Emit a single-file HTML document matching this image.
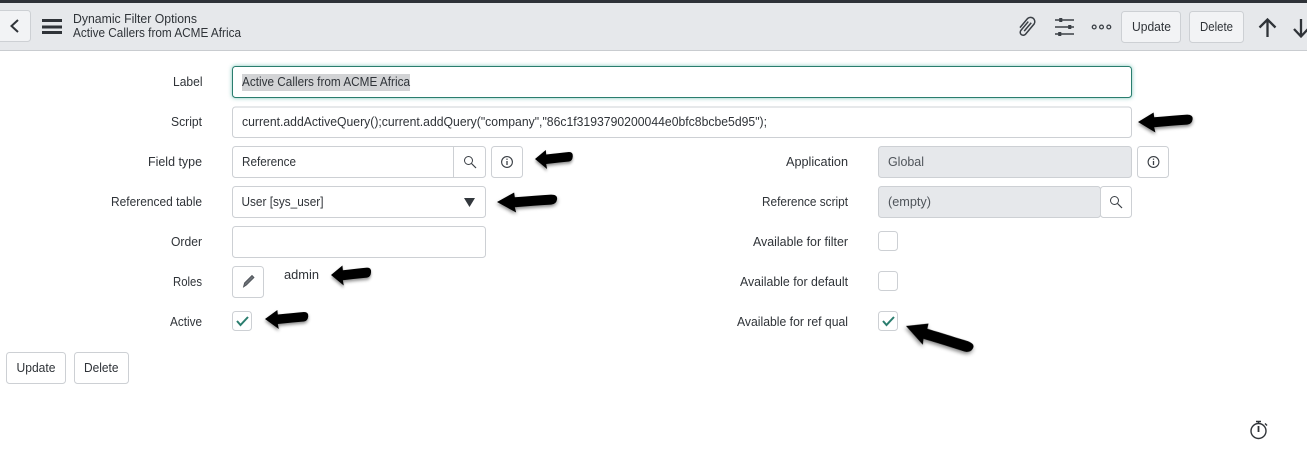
<!DOCTYPE html>
<html><head><meta charset="utf-8">
<style>
html,body{margin:0;padding:0;background:#fff;width:1307px;height:472px;overflow:hidden}
svg{display:block}
text{font-family:"Liberation Sans",sans-serif;font-size:12.5px;fill:#2f3338}
.b{fill:#fff;stroke:#cdd0d4;stroke-width:1}
.g{fill:#e6e8eb;stroke:#cdd0d4;stroke-width:1}
.t{fill:#f2f3f5;stroke:#cdd0d4;stroke-width:1}
.i{fill:none;stroke:#3a3f45;stroke-width:1.1}
.c{fill:none;stroke:#2a7d6e;stroke-width:2}
</style></head><body>
<svg width="1307" height="472" viewBox="0 0 1307 472" xmlns="http://www.w3.org/2000/svg">
<defs>
<filter id="s" x="-30%" y="-50%" width="160%" height="220%"><feDropShadow dx="0" dy="2" stdDeviation="1.6" flood-color="#000" flood-opacity=".45"/></filter>
<filter id="glow" x="-2%" y="-30%" width="104%" height="160%"><feGaussianBlur stdDeviation="2.2"/></filter>
<path id="arr" d="M0 0 L13 -9 L13.500 -4.500 Q30 -6 41 -7 Q46 -7 45.500 -2.500 Q45 2 41 2.500 Q28 3.500 13.500 5 L14.500 10 Z" fill="#000" filter="url(#s)"/>
<g id="info" class="i"><circle cx="0" cy="0" r="5.400"/><path d="M0 -1V3" stroke-width="1.300"/><path d="M0 -3.400V-2.200" stroke-width="1.300"/></g>
<g id="mag" fill="none" stroke="#3a3f45"><circle cx="-1.500" cy="-1.500" r="4"/><path d="M1.500 1.500L6 6" stroke-width="1.200"/></g>
</defs>

<rect x="0" y="0" width="1307" height="3" fill="#2e3238"/>
<rect x="0" y="3" width="1307" height="47" fill="#e6e8eb"/>
<rect x="0" y="50" width="1307" height="1" fill="#c9ccd0"/>

<rect x="-3" y="10.500" width="33.500" height="31" rx="3" class="t"/>
<path d="M18 20L11.500 26L18 32" fill="none" stroke="#2f3338" stroke-width="2"/>
<path d="M42 20.500H62M42 27H62M42 32.500H62" stroke="#2f3338" stroke-width="3"/>
<text x="73" y="23" textLength="124" lengthAdjust="spacingAndGlyphs">Dynamic Filter Options</text>
<text x="73" y="37" textLength="168" lengthAdjust="spacingAndGlyphs">Active Callers from ACME Africa</text>

<g transform="translate(1027,27) rotate(40)" fill="none" stroke="#3a3f45" stroke-width="1.500"><path d="M-2.500 -5V6.500A3 3 0 0 0 3.500 6.500V-7A4.300 4.300 0 0 0 -5 -7V5"/><path d="M0.500 -6V5"/></g>
<path d="M1055 20H1074M1055 27H1074M1055 34H1074" stroke="#3a3f45" stroke-width="1.500"/>
<path d="M1060 18v4M1061.500 18v4M1069 25v4M1070.500 25v4M1059 32v4M1060.500 32v4" stroke="#3a3f45" stroke-width="1.600"/>
<g fill="none" stroke="#3a3f45" stroke-width="1.300"><circle cx="1094.200" cy="27" r="1.900"/><circle cx="1101.500" cy="27" r="1.900"/><circle cx="1108.800" cy="27" r="1.900"/></g>
<rect x="1121.500" y="11.500" width="59" height="31" rx="3" class="t"/>
<text x="1132" y="31" textLength="39" lengthAdjust="spacingAndGlyphs">Update</text>
<rect x="1189.500" y="11.500" width="54" height="31" rx="3" class="t"/>
<text x="1200" y="31" textLength="33" lengthAdjust="spacingAndGlyphs">Delete</text>
<path d="M1267.500 37V20M1259.500 27.500L1267.500 19.500L1275.500 27.500" fill="none" stroke="#2f3338" stroke-width="2.300"/>
<path d="M1301 19V36M1294 29L1301 36.500L1308 29" fill="none" stroke="#2f3338" stroke-width="2.300"/>

<rect x="232" y="66" width="900" height="32" rx="3" fill="#5fb8aa" opacity=".8" filter="url(#glow)"/>
<rect x="232.500" y="66.500" width="899" height="31" rx="3" fill="#fff" stroke="#2a7d6e"/>
<rect x="242" y="74" width="168" height="17" fill="#d2d3d5"/>
<rect x="232.500" y="107" width="899" height="30.500" rx="3" class="b"/>
<rect x="232.500" y="146.500" width="253" height="31" rx="3" class="b"/>
<path d="M453.500 147V177" stroke="#cdd0d4"/>
<rect x="491.500" y="146.500" width="31" height="31" rx="3" class="b"/>
<rect x="232.500" y="186.500" width="253" height="31" rx="3" class="b"/>
<path d="M464 198H475L469.500 207Z" fill="#33383d"/>
<rect x="232.500" y="226.500" width="253" height="31" rx="3" class="b"/>
<rect x="232.500" y="266.500" width="31" height="31" rx="3" class="b"/>
<rect x="232.500" y="311.500" width="19" height="19" rx="3" class="b"/>
<rect x="878.500" y="146.500" width="253" height="31" rx="3" class="g"/>
<rect x="1137.500" y="146.500" width="31" height="31" rx="3" class="b"/>
<rect x="878.500" y="186.500" width="222" height="31" rx="3" class="g"/>
<rect x="1100.500" y="186.500" width="31" height="31" rx="3" class="b"/>
<rect x="878.500" y="231.500" width="19" height="19" rx="3" class="b"/>
<rect x="878.500" y="271.500" width="19" height="19" rx="3" class="b"/>
<rect x="878.500" y="311.500" width="19" height="19" rx="3" class="b"/>
<rect x="6.500" y="352.500" width="59" height="31" rx="3" class="b"/>
<rect x="74.500" y="352.500" width="54" height="31" rx="3" class="b"/>

<use href="#mag" x="470" y="162"/>
<use href="#mag" x="1116" y="202"/>
<use href="#info" x="507" y="162"/>
<use href="#info" x="1153.500" y="162"/>
<path d="M243.500 287L244.500 283L252 275.500L254 277.500L246.500 285Z" fill="#6a6f75" stroke="#4a4f55" stroke-width=".8"/>
<path d="M237 321L240.500 325L248 317" class="c"/>
<path d="M883 321L886.500 325L894 317" class="c"/>

<text x="173" y="86" textLength="29.500" lengthAdjust="spacingAndGlyphs">Label</text>
<text x="171" y="126" textLength="31" lengthAdjust="spacingAndGlyphs">Script</text>
<text x="148" y="166" textLength="54" lengthAdjust="spacingAndGlyphs">Field type</text>
<text x="111" y="206" textLength="91" lengthAdjust="spacingAndGlyphs">Referenced table</text>
<text x="171" y="246" textLength="31" lengthAdjust="spacingAndGlyphs">Order</text>
<text x="173" y="286" textLength="29" lengthAdjust="spacingAndGlyphs">Roles</text>
<text x="170" y="326" textLength="32" lengthAdjust="spacingAndGlyphs">Active</text>
<text x="242" y="86" textLength="168" lengthAdjust="spacingAndGlyphs">Active Callers from ACME Africa</text>
<text x="242" y="126" textLength="525" lengthAdjust="spacingAndGlyphs">current.addActiveQuery();current.addQuery("company","86c1f3193790200044e0bfc8bcbe5d95");</text>
<text x="242" y="166" textLength="54" lengthAdjust="spacingAndGlyphs">Reference</text>
<text x="241.500" y="206" textLength="82" lengthAdjust="spacingAndGlyphs">User [sys_user]</text>
<text x="284" y="279" textLength="35" lengthAdjust="spacingAndGlyphs">admin</text>
<text x="786" y="166" textLength="62" lengthAdjust="spacingAndGlyphs">Application</text>
<text x="762" y="206" textLength="86" lengthAdjust="spacingAndGlyphs">Reference script</text>
<text x="753" y="246" textLength="95" lengthAdjust="spacingAndGlyphs">Available for filter</text>
<text x="740" y="286" textLength="108" lengthAdjust="spacingAndGlyphs">Available for default</text>
<text x="737" y="326" textLength="111" lengthAdjust="spacingAndGlyphs">Available for ref qual</text>
<text x="888" y="166" textLength="36" lengthAdjust="spacingAndGlyphs" style="fill:#50555b">Global</text>
<text x="888" y="206" textLength="43" lengthAdjust="spacingAndGlyphs" style="fill:#50555b">(empty)</text>
<text x="16.500" y="372" textLength="39" lengthAdjust="spacingAndGlyphs">Update</text>
<text x="84" y="372" textLength="34.500" lengthAdjust="spacingAndGlyphs">Delete</text>

<use href="#arr" transform="translate(1138,122) scale(1.200,1.050)"/>
<use href="#arr" transform="translate(535,159) scale(.830,1)"/>
<use href="#arr" transform="translate(497,202) scale(1.320,1.050)"/>
<use href="#arr" transform="translate(331,275) scale(.880,1.050)"/>
<use href="#arr" transform="translate(265,319) scale(.950,1)"/>
<use href="#arr" transform="translate(906,326) rotate(21) scale(1.550,1.150)"/>

<g fill="none" stroke="#2f3338" stroke-width="1.400"><circle cx="1258.500" cy="431" r="7.500"/><path d="M1258.500 426V432" stroke-width="1.800"/><path d="M1256 421.500H1261M1258.500 421.500V423.500"/><path d="M1265 423.500L1267 425.500"/></g>
</svg>
</body></html>
